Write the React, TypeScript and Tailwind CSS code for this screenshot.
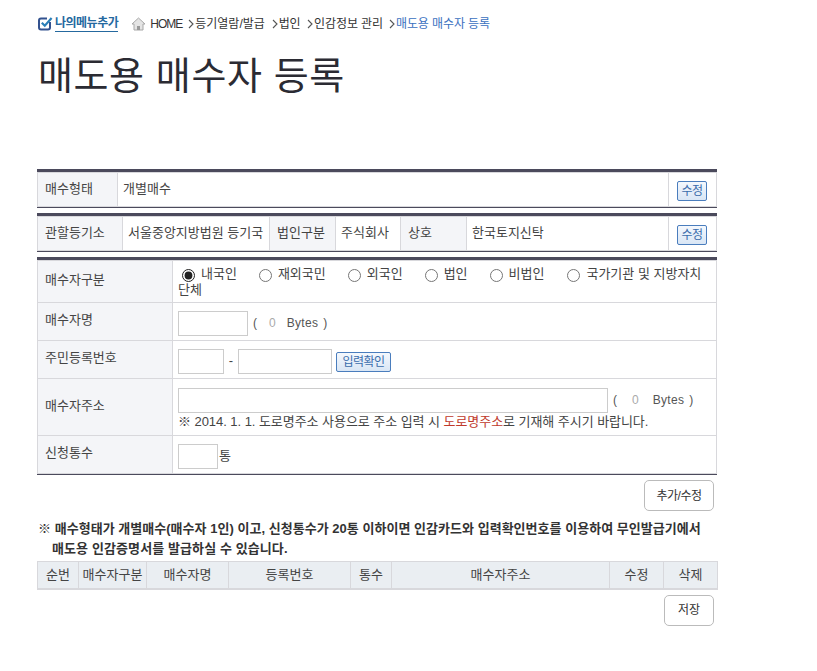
const labelCell = "bg-[#f4f5f8] border border-[#d8d8dc] pl-[7px] pb-[2px] text-left font-normal";
const formLabelCell = "bg-[#f4f5f8] border border-[#d8d8dc] pl-[7px] pb-[3px] text-left font-normal";
const fieldCell = "border border-[#d8d8dc] pl-[5px] text-left";
const textInput = "h-[25px] border border-[#cccccc] bg-white align-middle";
const plainButton = "rounded-[5px] border border-[#bbbbbb] bg-white text-[12px] text-[#333]";
const headCell = "border border-[#d8d8dc] font-normal text-center";

function Chevron() {
  return (
    <svg width="6" height="10" viewBox="0 0 6 10" className="shrink-0" aria-hidden="true">
      <path d="M1 1l4 4-4 4" fill="none" stroke="#555" strokeWidth="1.1" />
    </svg>
  );
}

function EditButton() {
  return (
    <button
      type="button"
      className="h-[20px] w-[30px] rounded-[2px] border border-[#4a7dbd] bg-gradient-to-b from-[#f4f8fd] to-[#d9e6f5] text-[12px] leading-[16px] tracking-[-0.5px] text-[#3a6cab]"
    >
      수정
    </button>
  );
}

function Radio({ label, checked, className }: { label: string; checked?: boolean; className: string }) {
  return (
    <label className={className}>
      <input
        type="radio"
        name="buyerType"
        defaultChecked={checked}
        className="m-0 mr-[6px] inline-block size-[13px] align-[-4px] accent-[#222]"
      />
      {label}
    </label>
  );
}

function Bytes({ zeroGap, labelGap }: { zeroGap: string; labelGap: string }) {
  return (
    <span className="ml-[5px] inline-flex items-center text-[12px] text-[#555]">
      (<span className={`${zeroGap} text-[#aaa]`}>0</span>
      <span className={`${labelGap} tracking-[0.3px]`}>Bytes</span>
      <span className="ml-[5px]">)</span>
    </span>
  );
}

export default function App() {
  return (
    <div className="min-h-[671px] w-[817px] bg-white pl-[37px] font-['Liberation_Sans','Noto_Sans_CJK_KR',sans-serif] text-[13px] text-[#444]">
      <div className="flex h-[47px] items-center text-[12px] text-[#333]">
        <svg width="16" height="17" viewBox="0 0 16 16" aria-hidden="true">
          <path d="M13 6.5V12a2 2 0 0 1-2 2H4a2 2 0 0 1-2-2V5a2 2 0 0 1 2-2h6" fill="none" stroke="#33528f" strokeWidth="2" />
          <path d="M4.8 7.2l3 3L14.6 2.6" fill="none" stroke="#2a7fb8" strokeWidth="2.2" />
        </svg>
        <span className="ml-[2px] border-b border-[#25699f] text-[12px] leading-[15px] font-bold tracking-[-0.5px] text-[#25699f]">
          나의메뉴추가
        </span>
        <svg width="15" height="14" viewBox="0 0 15 14" className="ml-[13px]" aria-hidden="true">
          <path d="M7.5 1L1 7h2v6h9V7h2z" fill="#e4e4e4" stroke="#a8a8a8" />
          <rect x="6" y="9" width="3" height="4" fill="#999" />
        </svg>
        <span className="ml-[4px] tracking-[-1px]">HOME</span>
        <span className="ml-[6px]"><Chevron /></span>
        <span className="ml-[1px]">등기열람/발급</span>
        <span className="ml-[7px]"><Chevron /></span>
        <span className="ml-[1px] tracking-[-0.4px]">법인</span>
        <span className="ml-[7px]"><Chevron /></span>
        <span className="ml-[1px] tracking-[-0.1px]">인감정보 관리</span>
        <span className="ml-[6px]"><Chevron /></span>
        <span className="ml-[1px] tracking-[-0.1px] text-[#3a70c0]">매도용 매수자 등록</span>
      </div>

      <h1 className="ml-[1px] h-[122px] pt-[2px] text-[38px] leading-[54px] font-normal tracking-[0.6px] text-[#2b2b33]">매도용 매수자 등록</h1>

      <div className="w-[680px] border-t-[3px] border-b border-[#4b4a5c]">
        <table className="w-full table-fixed border-collapse">
          <tbody>
            <tr className="h-[34px]">
              <th className={`${labelCell} w-[80px]`}>매수형태</th>
              <td className={`${fieldCell} pb-[2px]`}>개별매수</td>
              <td className={`${fieldCell} w-[48px] !pl-[8px] pt-[3px]`}><EditButton /></td>
            </tr>
          </tbody>
        </table>
      </div>

      <div className="mt-[5px] w-[680px] border-t-[3px] border-b border-[#4b4a5c]">
        <table className="w-full table-fixed border-collapse">
          <tbody>
            <tr className="h-[34px]">
              <th className={`${labelCell} w-[85px]`}>관할등기소</th>
              <td className={`${fieldCell} w-[147px] whitespace-nowrap pb-[2px]`}>서울중앙지방법원 등기국</td>
              <th className={`${labelCell} w-[66px]`}>법인구분</th>
              <td className={`${fieldCell} w-[65px] pb-[2px]`}>주식회사</td>
              <th className={`${labelCell} w-[66px]`}>상호</th>
              <td className={`${fieldCell} pb-[2px]`}>한국토지신탁</td>
              <td className={`${fieldCell} w-[48px] !pl-[8px] pt-[3px]`}><EditButton /></td>
            </tr>
          </tbody>
        </table>
      </div>

      <div className="mt-[5px] w-[680px] border-t-[3px] border-b border-[#4b4a5c]">
        <table className="w-full table-fixed border-collapse">
          <tbody>
            <tr className="h-[42px]">
              <th className={`${formLabelCell} w-[135px]`}>매수자구분</th>
              <td className={`${fieldCell} pr-[12px] leading-[15px]`}>
                <Radio checked label="내국인" className="ml-[4px] mr-[22px]" />
                <Radio label="재외국민" className="mr-[22px]" />
                <Radio label="외국인" className="mr-[22px]" />
                <Radio label="법인" className="mr-[22px]" />
                <Radio label="비법인" className="mr-[23px]" />
                <Radio label="국가기관 및 지방자치" className="whitespace-nowrap" />
                <span className="block">단체</span>
              </td>
            </tr>
            <tr className="h-[38px]">
              <th className={formLabelCell}>매수자명</th>
              <td className={`${fieldCell} pt-[4px]`}>
                <input type="text" className={`${textInput} w-[70px]`} />
                <Bytes zeroGap="ml-[12px]" labelGap="ml-[11px]" />
              </td>
            </tr>
            <tr className="h-[38px]">
              <th className={formLabelCell}>주민등록번호</th>
              <td className={`${fieldCell} pt-[4px]`}>
                <input type="text" className={`${textInput} w-[46px]`} />
                <span className="mx-[4px] inline-block w-[6px] text-center">-</span>
                <input type="text" className={`${textInput} w-[94px]`} />
                <button
                  type="button"
                  className="ml-[4px] h-[20px] w-[55px] rounded-[2px] border border-[#4a7dbd] bg-gradient-to-b from-[#f4f8fd] to-[#d9e6f5] align-middle text-[12px] leading-[16px] tracking-[-0.5px] text-[#3a6cab]"
                >
                  입력확인
                </button>
              </td>
            </tr>
            <tr className="h-[57px]">
              <th className={formLabelCell}>매수자주소</th>
              <td className={`${fieldCell} pt-[3px]`}>
                <div className="flex items-center">
                  <input type="text" className={`${textInput} w-[430px]`} />
                  <Bytes zeroGap="ml-[15px]" labelGap="ml-[14px]" />
                </div>
                <div className="leading-[17px] tracking-[-0.05px] whitespace-nowrap">
                  ※ 2014. 1. 1. 도로명주소 사용으로 주소 입력 시 <span className="text-[#c0392b]">도로명주소</span>로 기재해 주시기 바랍니다.
                </div>
              </td>
            </tr>
            <tr className="h-[38px]">
              <th className={formLabelCell}>신청통수</th>
              <td className={`${fieldCell} pt-[4px]`}>
                <input type="text" className={`${textInput} w-[40px]`} />
                <span className="ml-[1px]">통</span>
              </td>
            </tr>
          </tbody>
        </table>
      </div>

      <div className="flex w-[677px] justify-end pt-[5px]">
        <button type="button" className={`${plainButton} h-[31px] w-[70px] tracking-[-0.5px]`}>추가/수정</button>
      </div>

      <div className="mt-[8px] w-[680px] pl-[1px] text-[13px] leading-[20px] font-bold text-[#333]">
        <p className="whitespace-nowrap tracking-[0.03px]">※ 매수형태가 개별매수(매수자 1인) 이고, 신청통수가 20통 이하이면 인감카드와 입력확인번호를 이용하여 무인발급기에서</p>
        <p className="pl-[14px] tracking-[0.1px]">매도용 인감증명서를 발급하실 수 있습니다.</p>
      </div>

      <table className="mt-[2px] w-[681px] table-fixed border-collapse border-b-[2px] border-[#d8d8dc] bg-[#eaeef2]">
        <thead>
          <tr className="h-[27px]">
            <th className={`${headCell} w-[41px]`}>순번</th>
            <th className={`${headCell} w-[68px]`}>매수자구분</th>
            <th className={`${headCell} w-[82px]`}>매수자명</th>
            <th className={`${headCell} w-[122px]`}>등록번호</th>
            <th className={`${headCell} w-[41px]`}>통수</th>
            <th className={headCell}>매수자주소</th>
            <th className={`${headCell} w-[54px]`}>수정</th>
            <th className={`${headCell} w-[54px]`}>삭제</th>
          </tr>
        </thead>
      </table>

      <div className="flex w-[677px] justify-end pt-[5px]">
        <button type="button" className={`${plainButton} h-[31px] w-[50px]`}>저장</button>
      </div>
    </div>
  );
}
